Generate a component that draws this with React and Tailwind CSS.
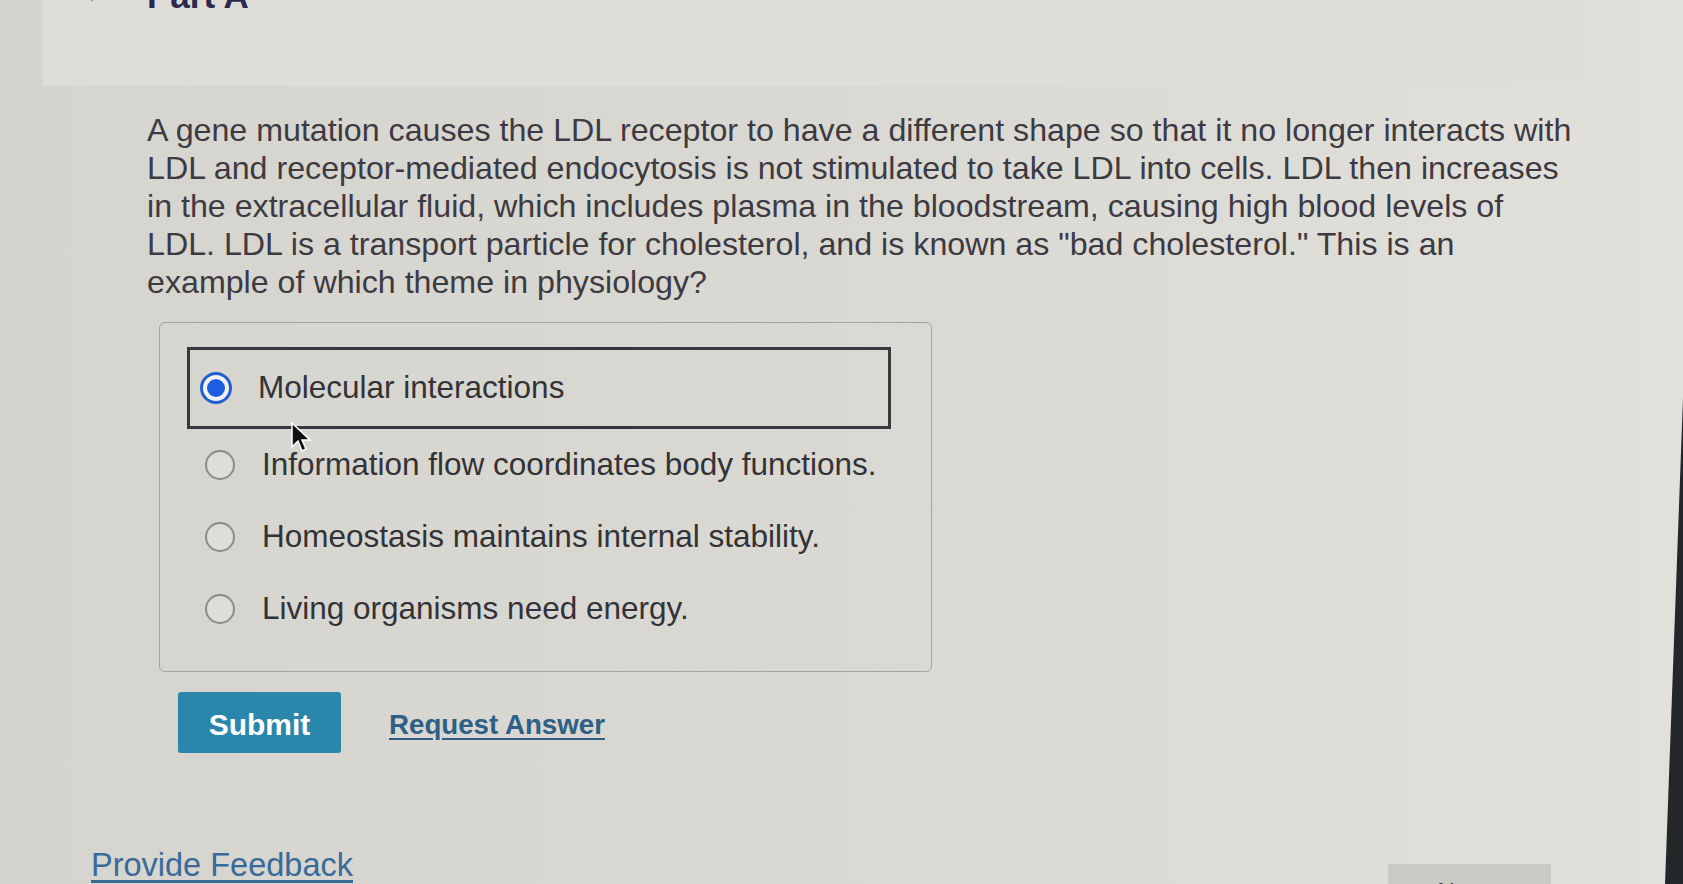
import React from "react";

const options = [
  "Molecular interactions",
  "Information flow coordinates body functions.",
  "Homeostasis maintains internal stability.",
  "Living organisms need energy.",
];

const Radio = ({ checked }) =>
  checked ? (
    <span className="flex h-[32px] w-[32px] shrink-0 items-center justify-center rounded-full border-[3px] border-[#1f5fd0] bg-[#f2f2f2]">
      <span className="h-[18px] w-[18px] rounded-full bg-[#1d5de0]" />
    </span>
  ) : (
    <span className="h-[30px] w-[30px] shrink-0 rounded-full border-[2px] border-[#8c8b8a] bg-[#dfddd8]" />
  );

const App = () => {
  return (
    <div
      className="relative flex h-[884px] w-[1683px] flex-col overflow-hidden bg-gradient-to-r from-[#d6d4ce] via-[#dad8d2] to-[#e2e0db] text-[#3d3a42]"
      style={{ fontFamily: '"Liberation Sans", Arial, sans-serif' }}
    >
      {/* ===== HEADER BAND ===== */}
      <div className="ml-[43px] mr-[100px] h-[86px] shrink-0 bg-[#dfddd8]">
        <div className="-mt-[24px] flex items-center">
          <span className="ml-[42px] h-0 w-0 border-x-[7px] border-t-[9px] border-x-transparent border-t-[#2a2838]" />
          <h2 className="ml-[48px] text-[35px] font-bold leading-[40px] text-[#2b2950]">Part A</h2>
        </div>
      </div>

      {/* ===== QUESTION ===== */}
      <p className="ml-[147px] mt-[25px] text-[32.2px] leading-[38px] text-[#3d3a42]">
        A gene mutation causes the LDL receptor to have a different shape so that it no longer interacts with
        <br />
        LDL and receptor-mediated endocytosis is not stimulated to take LDL into cells. LDL then increases
        <br />
        in the extracellular fluid, which includes plasma in the bloodstream, causing high blood levels of
        <br />
        LDL. LDL is a transport particle for cholesterol, and is known as "bad cholesterol." This is an
        <br />
        example of which theme in physiology?
      </p>

      {/* ===== OPTIONS ===== */}
      <div className="ml-[159px] mt-[21px] flex h-[354px] w-[773px] flex-col rounded-[6px] border-[1.5px] border-[#a5a3a0] pt-[24px]">
        <div className="ml-[27px] flex h-[82px] w-[704px] items-center border-[3px] border-[#38383c] pl-[10px]">
          <Radio checked />
          <span className="ml-[26px] text-[31.5px] text-[#333236]">{options[0]}</span>
        </div>
        {options.slice(1).map((o) => (
          <div key={o} className="ml-[45px] flex h-[72px] items-center">
            <Radio />
            <span className="ml-[27px] text-[31.5px] text-[#333236]">{o}</span>
          </div>
        ))}
      </div>

      {/* ===== ACTIONS ===== */}
      <div className="ml-[178px] mt-[20px] flex items-center">
        <button className="h-[61px] w-[163px] rounded-[3px] bg-[#2a87ab] pt-[3px] text-[30px] font-bold text-white">
          Submit
        </button>
        <a className="ml-[48px] mt-[5px] text-[27.7px] font-bold text-[#2e5f85] underline underline-offset-[4px]">
          Request Answer
        </a>
      </div>

      <a className="ml-[91px] mt-[93px] w-fit text-[32.5px] leading-[38px] text-[#3a6a98] underline underline-offset-[4px]">
        Provide Feedback
      </a>

      {/* bottom right button edge */}
      <div className="absolute bottom-0 left-[1388px] flex h-[20px] w-[163px] justify-center bg-[#cbc9c4] pt-[16px] text-[24px] leading-[24px] text-[#333]">
        Next ›
      </div>
      {/* monitor bezel */}
      <div className="absolute right-0 top-0 h-full w-[18px] bg-[#24272a] [clip-path:polygon(100%_45%,100%_100%,0_100%)]" />

      {/* mouse cursor */}
      <svg className="absolute left-[290px] top-[422px]" width="22" height="32" viewBox="0 0 22 32">
        <path d="M2 1 L2 25 L8 19 L12 29 L16 27 L12 18 L20 18 Z" fill="#111" stroke="#fff" strokeWidth="1.5" />
      </svg>
    </div>
  );
};

export default App;
